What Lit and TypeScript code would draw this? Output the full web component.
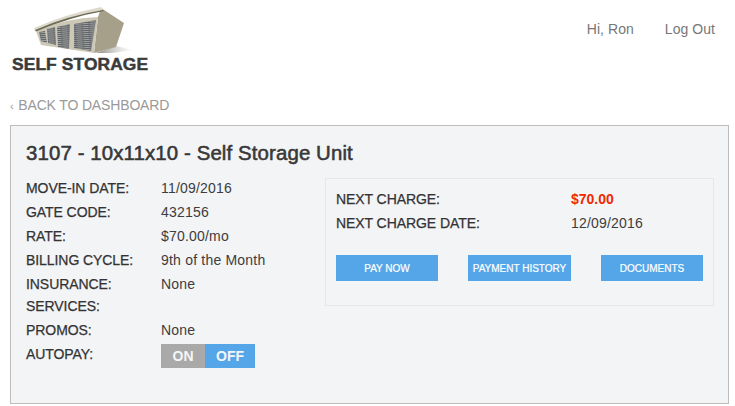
import { LitElement, html, css } from "lit";
import { customElement } from "lit/decorators.js";

@customElement("app-root")
export class AppRoot extends LitElement {
  static styles = css`
    :host {
      display: block;
      width: 735px;
      height: 406px;
      overflow: hidden;
      background: #fff;
      font-family: "Liberation Sans", Arial, sans-serif;
      color: #333;
      font-size: 14px;
    }
    .header {
      display: flex;
      justify-content: space-between;
      align-items: flex-start;
      height: 96px;
      padding: 0 20px 0 12px;
    }
    .logo {
      display: flex;
      flex-direction: column;
    }
    .logo svg {
      display: block;
      margin-top: 5px;
    }
    .logo-text {
      font-size: 17.4px;
      line-height: 16px;
      font-weight: 700;
      color: #3a3a3a;
      -webkit-text-stroke: 0.5px #3a3a3a;
      letter-spacing: 0.1px;
      white-space: nowrap;
      margin-top: 1px;
    }
    .nav {
      display: flex;
      gap: 31px;
      padding-top: 21px;
      line-height: 16px;
      color: #777;
      letter-spacing: 0.05px;
    }
    .back {
      padding-left: 10px;
      height: 20px;
      line-height: 18px;
      color: #999;
      letter-spacing: -0.15px;
    }
    .back .chev { font-size: 11px; margin-right: 1px; }
    .panel {
      margin: 9px 6px 0 10px;
      height: 279px;
      box-sizing: border-box;
      border: 1px solid #bdbdbd;
      background: #f3f4f6;
      padding: 15px 14px 0 15px;
    }
    h1 {
      margin: 0;
      font-size: 20.4px;
      line-height: 24px;
      font-weight: 400;
      color: #383838;
      letter-spacing: 0.12px;
      -webkit-text-stroke: 0.55px #383838;
    }
    .cols {
      display: flex;
      justify-content: space-between;
      margin-top: 11px;
    }
    .info {
      display: grid;
      grid-template-columns: 135px auto;
      grid-template-rows: repeat(4, 24px) 22px repeat(3, 24px);
      align-content: start;
      line-height: 24px;
      width: 280px;
    }
    .lbl {
      color: #333;
      -webkit-text-stroke: 0.25px #333;
      white-space: nowrap;
      letter-spacing: -0.07px;
    }
    .val {
      color: #3d3d3d;
      white-space: nowrap;
      letter-spacing: 0.2px;
    }
    .toggle {
      display: flex;
      width: 94px;
      height: 24px;
      margin-top: 2px;
      color: #f4f6f8;
      font-weight: 700;
      text-align: center;
    }
    .on { width: 44px; background: #a9a9a9; }
    .off { width: 50px; background: #55a6e8; }
    .box {
      width: 389px;
      height: 128px;
      box-sizing: border-box;
      border: 1px solid #e5e7e9;
      padding: 8px 10px 0;
      margin-top: 2px;
    }
    .charge {
      display: grid;
      grid-template-columns: 235px auto;
      grid-auto-rows: 24px;
      line-height: 24px;
    }
    .val.red {
      color: #ee2a00;
      font-weight: 700;
      letter-spacing: 0;
    }
    .btns {
      display: flex;
      justify-content: space-between;
      margin-top: 20px;
    }
    .btn {
      width: 102px;
      height: 26px;
      background: #55a6e8;
      color: #fff;
      font-size: 10px;
      line-height: 27px;
      text-align: center;
      white-space: nowrap;
      -webkit-text-stroke: 0.2px #fff;
    }
    .btn.mid { width: 103px; }
  `;

  render() {
    return html`
      <div class="header">
        <div class="logo">
          <svg width="136" height="50" viewBox="12 5 136 50">
            <defs>
              <pattern id="door" width="7" height="2" patternUnits="userSpaceOnUse" patternTransform="rotate(-4)">
                <rect width="7" height="2" fill="#a2a4a4"></rect>
                <rect width="7" height="0.9" fill="#55585a"></rect>
                <rect x="2" y="0.9" width="2" height="0.6" fill="#6e7173"></rect>
              </pattern>
              <linearGradient id="sh" x1="0" x2="1" y1="0" y2="0">
                <stop offset="0" stop-color="#77776f" stop-opacity="0.9"></stop>
                <stop offset="1" stop-color="#c8c8c8" stop-opacity="0"></stop>
              </linearGradient>
            </defs>
            <path d="M96 53 L116 46 L134 50 L112 53 Z" fill="url(#sh)"></path>
            <path d="M101 8 L124 23 L116 47 L94 53 L98 17 Z" fill="#a6a08b"></path>
            <path d="M36 31 Q66 18 98 17 L94 53 L41 45 Z" fill="#cdc8b6"></path>
            <path d="M34 28 Q66 14 101 7 L103 10 Q70 16 35 30.5 Z" fill="#dedacb"></path>
            <path d="M35 30 Q68 15.5 103 10 L104 11 Q70 17 36 31.5 Z" fill="#6d6956"></path>
            <path d="M39 32 L45 31 L47 43 L41 41 Z" fill="url(#door)"></path>
            <path d="M47 29 L55 27 L56 45 L48 43 Z" fill="url(#door)"></path>
            <path d="M57 27 L70 24 L69 49 L58 47 Z" fill="url(#door)"></path>
            <path d="M74 24 L96 20 L91 51 L74 48 Z" fill="url(#door)"></path>
          </svg>
          <div class="logo-text">SELF STORAGE</div>
        </div>
        <div class="nav"><span>Hi, Ron</span><span>Log Out</span></div>
      </div>
      <div class="back"><span class="chev">‹</span> BACK TO DASHBOARD</div>
      <div class="panel">
        <h1>3107 - 10x11x10 - Self Storage Unit</h1>
        <div class="cols">
          <div class="info">
            <div class="lbl">MOVE-IN DATE:</div><div class="val">11/09/2016</div>
            <div class="lbl">GATE CODE:</div><div class="val">432156</div>
            <div class="lbl">RATE:</div><div class="val">$70.00/mo</div>
            <div class="lbl">BILLING CYCLE:</div><div class="val">9th of the Month</div>
            <div class="lbl">INSURANCE:</div><div class="val">None</div>
            <div class="lbl">SERVICES:</div><div class="val"></div>
            <div class="lbl">PROMOS:</div><div class="val">None</div>
            <div class="lbl">AUTOPAY:</div>
            <div class="toggle"><div class="on">ON</div><div class="off">OFF</div></div>
          </div>
          <div class="box">
            <div class="charge">
              <div class="lbl">NEXT CHARGE:</div><div class="val red">$70.00</div>
              <div class="lbl">NEXT CHARGE DATE:</div><div class="val">12/09/2016</div>
            </div>
            <div class="btns">
              <div class="btn">PAY NOW</div>
              <div class="btn mid">PAYMENT HISTORY</div>
              <div class="btn">DOCUMENTS</div>
            </div>
          </div>
        </div>
      </div>
    `;
  }
}
